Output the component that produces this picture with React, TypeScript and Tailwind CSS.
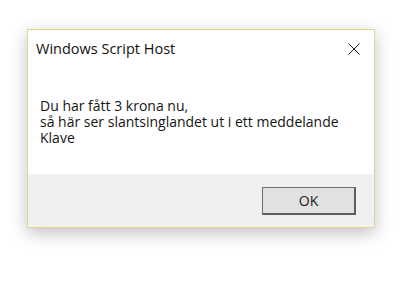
import { useState } from "react";

export default function App() {
  const [open, setOpen] = useState(true);

  return (
    <div className="w-[419px] h-[281px] bg-white overflow-hidden pt-[29px] pl-[27px] font-['Open_Sans',sans-serif]">
      {open && (
        <div className="w-[348px] h-[199px] flex flex-col border border-[#e6d68a] bg-white shadow-[0_5px_16px_rgba(0,0,0,0.25)]">
          {/* Title bar */}
          <div className="h-[38px] flex items-center justify-between pl-[8px] pr-[14px]">
            <span className="text-[14.5px] leading-[20px] text-[#111]">Windows Script Host</span>
            <button onClick={() => setOpen(false)} className="w-[12px] h-[12px] flex items-center justify-center">
              <svg width="12" height="12" viewBox="0 0 12 12" fill="none">
                <path d="M0.5 0.5L11.5 11.5M11.5 0.5L0.5 11.5" stroke="#111" strokeWidth="1" />
              </svg>
            </button>
          </div>

          {/* Message */}
          <div className="flex-1 pt-[30px] pl-[12px] text-[14px] leading-[16px] text-[#151515]">
            <p>Du har fått 3 krona nu,</p>
            <p>så här ser slantsinglandet ut i ett meddelande</p>
            <p>Klave</p>
          </div>

          {/* Buttons */}
          <div className="h-[53px] bg-[#f0f0f0] flex items-center justify-end pr-[18px]">
            <button
              onClick={() => setOpen(false)}
              className="w-[94px] h-[28px] bg-[#e1e1e1] border border-[#6e6e6e] border-r-2 border-b-2 border-r-[#5e5e5e] border-b-[#5e5e5e] text-[14px] text-[#1a1a1a] flex items-center justify-center"
            >
              OK
            </button>
          </div>
        </div>
      )}
    </div>
  );
}
